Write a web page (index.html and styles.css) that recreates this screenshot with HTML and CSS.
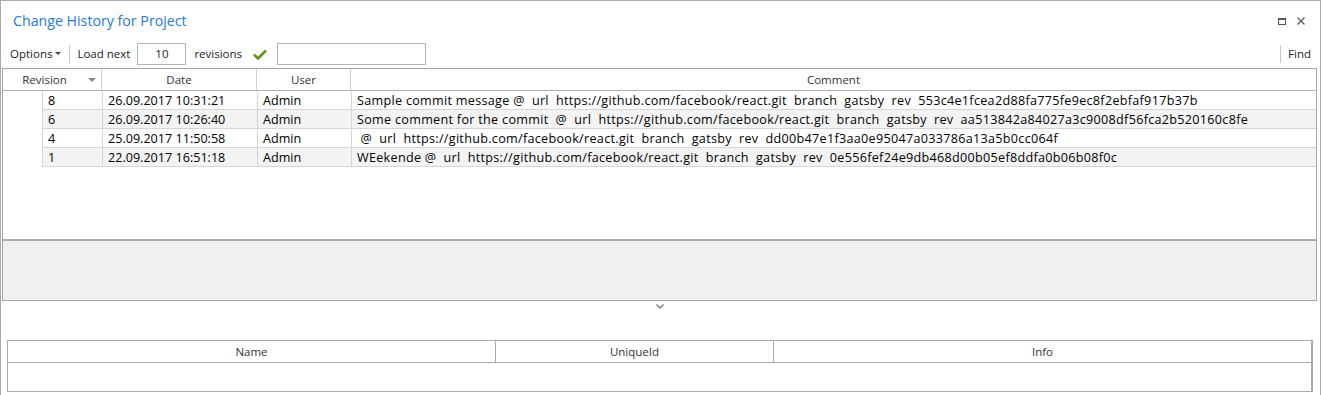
FILE: index.html
```html
<!DOCTYPE html>
<html lang="en">
<head>
  <meta charset="UTF-8">
  <title>Change History for Project</title>
  <link rel="stylesheet" href="styles.css">
</head>
<body>
  <div class="finestra">
    <div class="titolo">
      <span class="testo-titolo">Change History for Project</span>
      <div class="controlli">
        <span class="btn-max"></span>
        <svg class="btn-chiudi" width="8" height="8" viewBox="0 0 8 8"><path d="M0.5 0.5 L7.5 7.5 M7.5 0.5 L0.5 7.5" stroke="#555" stroke-width="1.2"/></svg>
      </div>
    </div>

    <div class="barra">
      <span class="voce">Options <span class="caret"></span></span>
      <span class="sep"></span>
      <span class="voce">Load next</span>
      <span class="campo numero">10</span>
      <span class="voce">revisions</span>
      <svg class="spunta" width="14" height="11" viewBox="0 0 14 11"><path d="M1 5.5 L5 9.5 L13 1.5" fill="none" stroke="#5b9a17" stroke-width="2.6" stroke-linejoin="round"/></svg>
      <span class="campo cerca"></span>
      <span class="spazio"></span>
      <span class="sep"></span>
      <span class="voce">Find</span>
    </div>

    <div class="griglia">
      <div class="intestazione">
        <div class="col c-rev">Revision <span class="ordina"></span></div>
        <div class="col c-data">Date</div>
        <div class="col c-utente">User</div>
        <div class="col c-commento">Comment</div>
      </div>
      <div class="corpo">
        <div class="riga">
          <div class="cella c-num">8</div>
          <div class="cella c-data">26.09.2017 10:31:21</div>
          <div class="cella c-utente">Admin</div>
          <div class="cella c-commento">Sample commit message @  url  https://github.com/facebook/react.git  branch  gatsby  rev  553c4e1fcea2d88fa775fe9ec8f2ebfaf917b37b</div>
        </div>
        <div class="riga alterna">
          <div class="cella c-num">6</div>
          <div class="cella c-data">26.09.2017 10:26:40</div>
          <div class="cella c-utente">Admin</div>
          <div class="cella c-commento">Some comment for the commit  @  url  https://github.com/facebook/react.git  branch  gatsby  rev  aa513842a84027a3c9008df56fca2b520160c8fe</div>
        </div>
        <div class="riga">
          <div class="cella c-num">4</div>
          <div class="cella c-data">25.09.2017 11:50:58</div>
          <div class="cella c-utente">Admin</div>
          <div class="cella c-commento"> @  url  https://github.com/facebook/react.git  branch  gatsby  rev  dd00b47e1f3aa0e95047a033786a13a5b0cc064f</div>
        </div>
        <div class="riga alterna">
          <div class="cella c-num">1</div>
          <div class="cella c-data">22.09.2017 16:51:18</div>
          <div class="cella c-utente">Admin</div>
          <div class="cella c-commento">WEekende @  url  https://github.com/facebook/react.git  branch  gatsby  rev  0e556fef24e9db468d00b05ef8ddfa0b06b08f0c</div>
        </div>
      </div>
      <div class="anteprima"></div>
    </div>

    <div class="divisore">
      <svg width="8" height="5" viewBox="0 0 8 5"><path d="M0.5 0.5 L4 4 L7.5 0.5" fill="none" stroke="#777" stroke-width="1.4"/></svg>
    </div>

    <div class="file">
      <div class="file-testa">
        <div class="fcol f-nome">Name</div>
        <div class="fcol f-id">UniqueId</div>
        <div class="fcol f-info">Info</div>
      </div>
      <div class="file-corpo"></div>
    </div>
  </div>
</body>
</html>
```

FILE: styles.css
```css
body {
  margin: 0;
  font-family: "Open Sans", "Noto Sans", sans-serif;
  font-size: 11.5px;
  color: #000;
  background: #fff;
}

.finestra {
  box-sizing: border-box;
  width: 1321px;
  height: 395px;
  border: 1px solid #ababab;
  border-bottom: none;
  display: flex;
  flex-direction: column;
}

/* barra del titolo */
.titolo {
  height: 40px;
  display: flex;
  align-items: center;
  padding: 0 15px 0 12px;
}
.testo-titolo {
  font-size: 14.2px;
  color: #1f7bd3;
  margin-top: -1px;
}
.controlli {
  margin-left: auto;
  display: flex;
  align-items: center;
  gap: 11px;
}
.btn-max {
  width: 6px;
  height: 4px;
  border: 1px solid #555;
  border-top-width: 2px;
}

/* toolbar */
.barra {
  height: 23px;
  margin-top: 1px;
  display: flex;
  align-items: center;
  padding: 0 9px 0 9px;
  color: #222;
}
.voce {
  display: flex;
  align-items: center;
}
.caret {
  width: 0;
  height: 0;
  border-left: 3px solid transparent;
  border-right: 3px solid transparent;
  border-top: 3px solid #444;
  margin-left: 3px;
}
.sep {
  width: 1px;
  height: 18px;
  background: #c8c8c8;
  margin: 0 7px 0 8px;
}
.campo {
  box-sizing: border-box;
  height: 22px;
  border: 1px solid #b4b4b4;
  display: flex;
  align-items: center;
  justify-content: center;
}
.numero {
  width: 49px;
  margin: 0 8px 0 7px;
}
.spunta {
  margin: 1px 10px 0 11px;
}
.cerca {
  width: 149px;
}
.spazio {
  flex: 1;
}

/* griglia revisioni */
.griglia {
  margin: 3px 3px 0 1px;
  border: 1px solid #a5a5a5;
  display: flex;
  flex-direction: column;
}
.intestazione {
  height: 21px;
  display: flex;
  border-bottom: 1px solid #b0b0b0;
  color: #333;
}
.col {
  display: flex;
  align-items: center;
  justify-content: center;
  border-right: 1px solid #d0d0d0;
  box-sizing: border-box;
}
.col.c-rev {
  width: 99px;
  position: relative;
  padding-right: 15px;
}
.ordina {
  position: absolute;
  right: 5px;
  top: 9px;
  border-left: 4px solid transparent;
  border-right: 4px solid transparent;
  border-top: 4px solid #8a8a8a;
}
.c-data { width: 155px; }
.c-utente { width: 94px; }
.c-commento { flex: 1; border-right: none; }

.corpo {
  height: 148px;
  padding-left: 39px;
}
.riga {
  height: 18px;
  display: flex;
  border-bottom: 1px solid #d6d6d6;
  font-size: 12.6px;
}
.riga.alterna {
  background: #f3f3f3;
}
.cella {
  box-sizing: border-box;
  padding-left: 5px;
  display: flex;
  align-items: center;
  white-space: pre;
  overflow: hidden;
  border-left: 1px solid #d6d6d6;
}
.c-num { width: 60px; }
.cella.c-commento {
  flex: 1;
  letter-spacing: 0.3px;
}

.anteprima {
  height: 59px;
  border-top: 2px solid #acacac;
  background: #f1f1f1;
}

.divisore {
  height: 39px;
  display: flex;
  justify-content: center;
  padding-top: 3px;
  box-sizing: border-box;
  padding-right: 2px;
}

/* tabella file */
.file {
  margin: 0 7px 0 6px;
  border: 1px solid #ababab;
  border-right-width: 2px;
}
.file-testa {
  height: 21px;
  display: flex;
  border-bottom: 1px solid #ababab;
  color: #333;
}
.fcol {
  display: flex;
  align-items: center;
  justify-content: center;
  border-right: 1px solid #ababab;
  box-sizing: border-box;
}
.f-nome { width: 488px; }
.f-id { width: 278px; }
.f-info { flex: 1; border-right: none; }
.file-corpo {
  height: 28px;
}
```
